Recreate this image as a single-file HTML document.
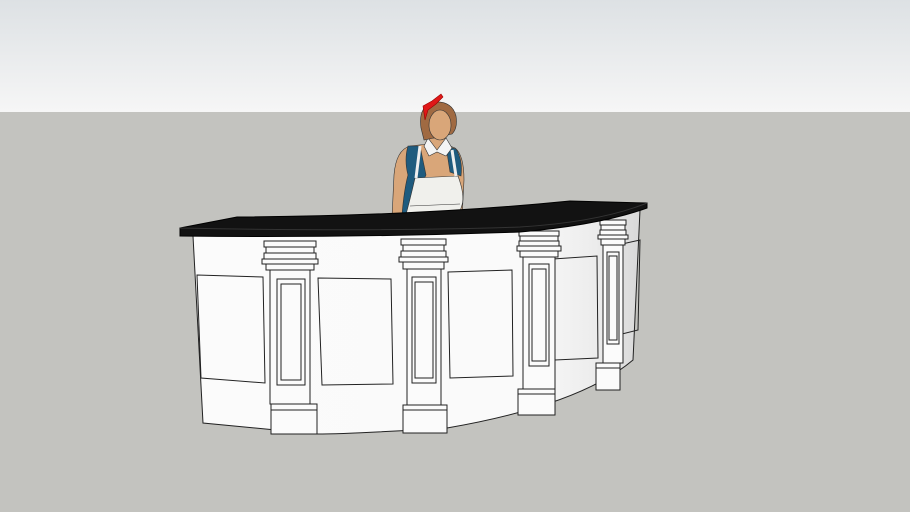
<!DOCTYPE html>
<html><head><meta charset="utf-8"><style>
html,body{margin:0;padding:0;width:910px;height:512px;overflow:hidden;background:#c3c3bf}
svg{display:block}
</style></head><body>
<svg width="910" height="512" viewBox="0 0 910 512" xmlns="http://www.w3.org/2000/svg">
<defs>
<linearGradient id="sky" x1="0" y1="0" x2="0" y2="1">
<stop offset="0" stop-color="#dde1e4"/><stop offset="1" stop-color="#f6f6f6"/>
</linearGradient>
<linearGradient id="body" x1="0" y1="0" x2="1" y2="0">
<stop offset="0" stop-color="#fbfbfb"/><stop offset="0.75" stop-color="#fafafa"/><stop offset="0.9" stop-color="#ececec"/><stop offset="1" stop-color="#d8d8d8"/>
</linearGradient>
</defs>
<rect x="0" y="0" width="910" height="112" fill="url(#sky)"/>
<rect x="0" y="112" width="910" height="400" fill="#c3c3bf"/>

<!-- person -->
<g stroke="#333" stroke-width="0.6">
<path d="M410,146 Q396,150 394,175 L392,218 L462,218 L464,180 Q464,155 455,148 L445,144 L428,144 Z" fill="#d9a679"/>
<path d="M408,146 L420,146 L426,175 L412,205 L406,216 L402,215 Q404,190 408,175 Q404,160 408,146 Z" fill="#1f5b7e"/>
<path d="M446,146 L456,149 Q463,160 461,176 L450,172 Z" fill="#1f5b7e"/>
<path d="M415,178 L458,176 Q465,195 462,205 L458,218 L405,218 Q410,200 415,178 Z" fill="#f0f0ec"/>
<path d="M420,146 L416,178 M452,150 L456,176" stroke="#eee" stroke-width="3"/>
<path d="M428,138 L446,138 L447,148 L438,152 L428,148 Z" fill="#d9a679"/>
<path d="M424,146 L428,138 L437,150 L446,138 L452,148 L446,156 L437,152 L429,156 Z" fill="#f4f4f4"/>
<path d="M421,128 Q418,108 432,102 Q452,100 456,116 Q458,128 452,134 L424,140 Z" fill="#a06a42"/>
<ellipse cx="440" cy="125" rx="11" ry="15" fill="#d9a679"/>
<path d="M423,106 L432,101 L441,94 L443,97 L436,104 L428,110 L425,120 Z" fill="#e01818" stroke="#900"/>
<path d="M410,206 L460,204" fill="none"/>
</g>

<!-- counter body -->
<path d="M193,236 Q420,236 640,210 L633,360 Q580,405 447,428 Q350,434 317,434 L203,423 Z" fill="url(#body)" stroke="#222" stroke-width="1"/>

<!-- panels -->
<g fill="none" stroke="#222" stroke-width="1">
<path d="M197,275 L263,277 L265,383 L201,378 Z"/>
<path d="M318,278 L391,279 L393,384 L322,385 Z"/>
<path d="M448,272 L512,270 L513,376 L450,378 Z"/>
<path d="M553,259 L597,256 L598,358 L555,360 Z"/>
<path d="M622,244 L640,240 L638,330 L622,334 Z"/>
</g>

<!-- pillars -->
<g fill="#fbfbfb" stroke="#222" stroke-width="1">
<rect x="264" y="241" width="52" height="6"/><rect x="266" y="247" width="48" height="6"/><rect x="264" y="253" width="52" height="6"/><rect x="262" y="259" width="56" height="5"/><rect x="266" y="264" width="48" height="6"/>
<rect x="270" y="270" width="40" height="134"/>
<rect x="277" y="279" width="28" height="106"/><rect x="281" y="284" width="20" height="96"/>
<rect x="271" y="404" width="46" height="30"/><rect x="271" y="410" width="46" height="24"/>

<rect x="401" y="239" width="45" height="6"/><rect x="403" y="245" width="41" height="6"/><rect x="401" y="251" width="45" height="6"/><rect x="399" y="257" width="49" height="5"/><rect x="403" y="262" width="41" height="7"/>
<rect x="407" y="269" width="34" height="136"/>
<rect x="412" y="277" width="24" height="106"/><rect x="415" y="282" width="18" height="96"/>
<rect x="403" y="405" width="44" height="28"/><rect x="403" y="410" width="44" height="23"/>

<rect x="519" y="231" width="40" height="5"/><rect x="520" y="236" width="38" height="5"/><rect x="519" y="241" width="40" height="5"/><rect x="517" y="246" width="44" height="5"/><rect x="520" y="251" width="38" height="6"/>
<rect x="523" y="257" width="32" height="132"/>
<rect x="529" y="264" width="20" height="102"/><rect x="532" y="269" width="14" height="92"/>
<rect x="518" y="389" width="37" height="26"/><rect x="518" y="394" width="37" height="21"/>

<rect x="600" y="220" width="26" height="5"/><rect x="601" y="225" width="24" height="5"/><rect x="600" y="230" width="26" height="5"/><rect x="598" y="235" width="30" height="4"/><rect x="601" y="239" width="24" height="6"/>
<rect x="603" y="245" width="20" height="118"/>
<rect x="607" y="252" width="12" height="92"/><rect x="609" y="256" width="8" height="84"/>
<rect x="596" y="363" width="24" height="27"/><rect x="596" y="368" width="24" height="22"/>
</g>

<!-- countertop -->
<path d="M180,228 L237,217 Q420,216 570,201 L647,203 L647,208 Q600,225 520,232 Q350,238 180,236 Z" fill="#121212" stroke="#000" stroke-width="1"/>
<path d="M180,228 Q380,232 520,227 Q600,222 647,203" fill="none" stroke="#333" stroke-width="1"/>
</svg>
</body></html>
